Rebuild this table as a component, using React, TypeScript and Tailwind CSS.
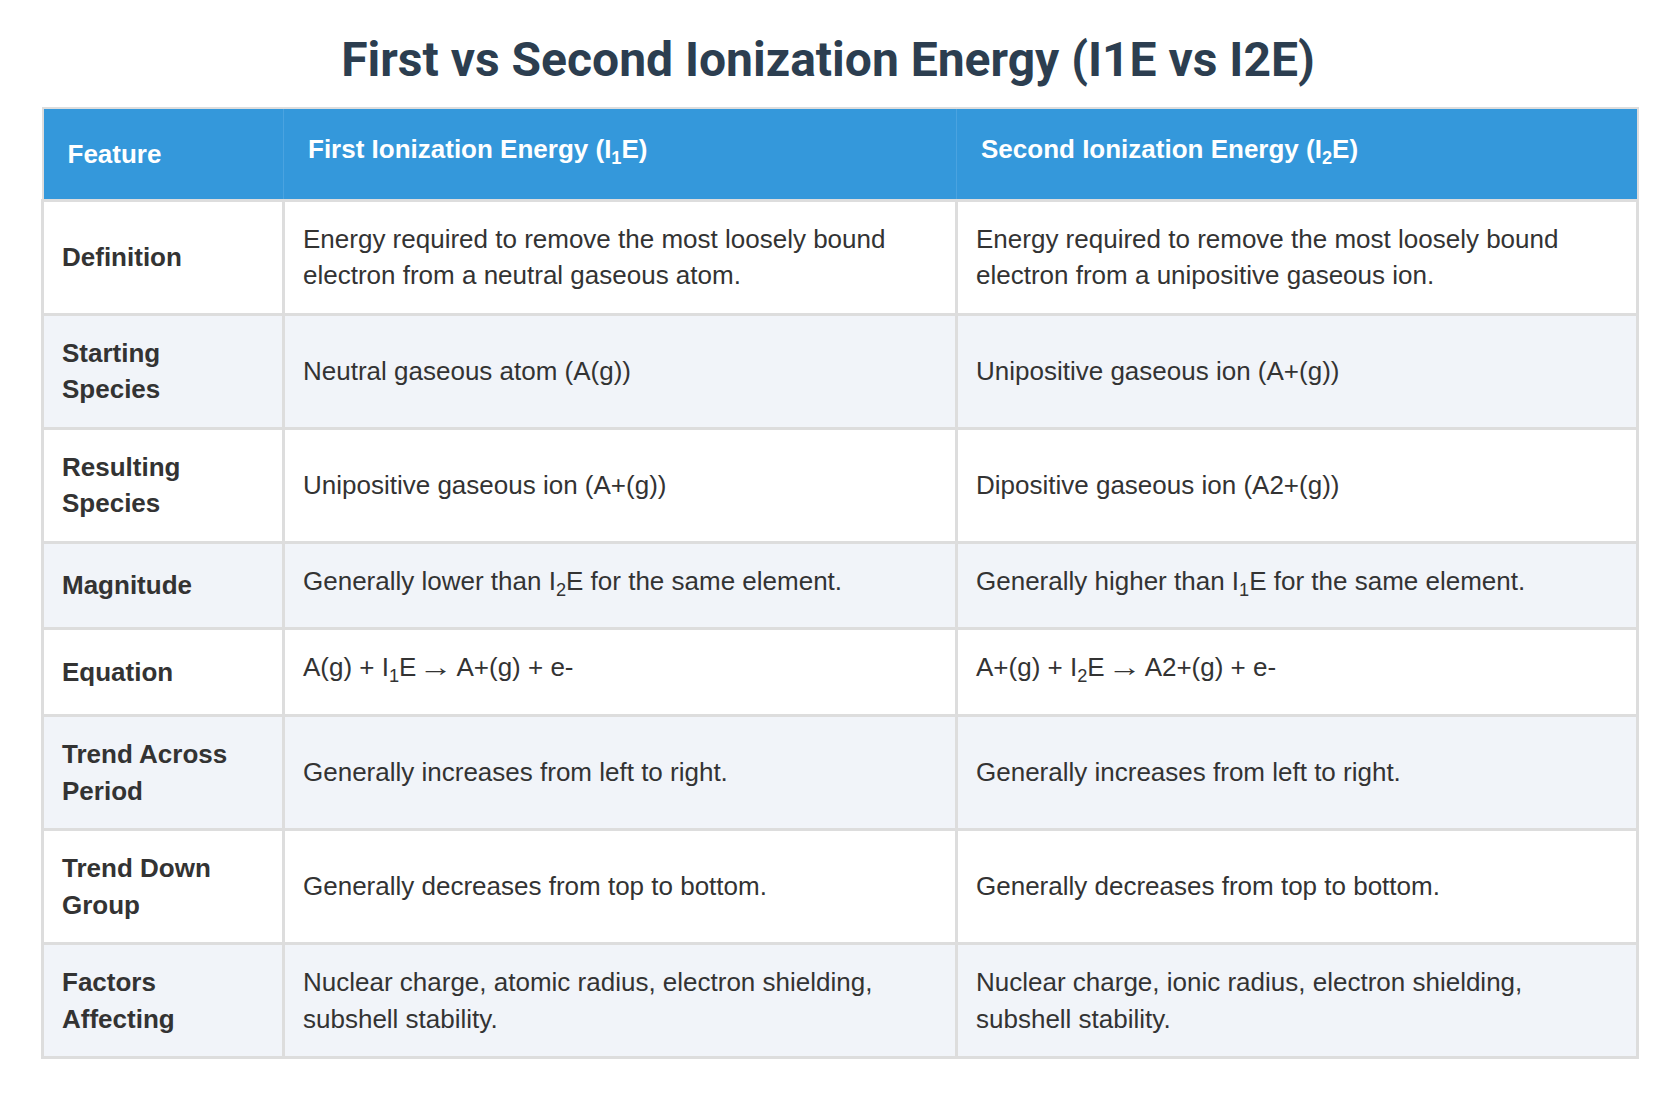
import React from "react";

type Row = {
  feature: string[];
  first: React.ReactNode;
  second: React.ReactNode;
};

function Sub({ children }: { children: React.ReactNode }) {
  return (
    <sub className="static align-sub text-[0.7em] leading-[36.5px]">{children}</sub>
  );
}

function Arrow() {
  return <span className="mx-[7px] inline-block scale-x-[1.3]">→</span>;
}

const rows: Row[] = [
  {
    feature: ["Definition"],
    first: "Energy required to remove the most loosely bound electron from a neutral gaseous atom.",
    second: "Energy required to remove the most loosely bound electron from a unipositive gaseous ion.",
  },
  {
    feature: ["Starting", "Species"],
    first: "Neutral gaseous atom (A(g))",
    second: "Unipositive gaseous ion (A+(g))",
  },
  {
    feature: ["Resulting", "Species"],
    first: "Unipositive gaseous ion (A+(g))",
    second: "Dipositive gaseous ion (A2+(g))",
  },
  {
    feature: ["Magnitude"],
    first: (
      <>
        Generally lower than I<Sub>2</Sub>E for the same element.
      </>
    ),
    second: (
      <>
        Generally higher than I<Sub>1</Sub>E for the same element.
      </>
    ),
  },
  {
    feature: ["Equation"],
    first: (
      <>
        A(g) + I<Sub>1</Sub>E<Arrow />A+(g) + e-
      </>
    ),
    second: (
      <>
        A+(g) + I<Sub>2</Sub>E<Arrow />A2+(g) + e-
      </>
    ),
  },
  {
    feature: ["Trend Across", "Period"],
    first: "Generally increases from left to right.",
    second: "Generally increases from left to right.",
  },
  {
    feature: ["Trend Down", "Group"],
    first: "Generally decreases from top to bottom.",
    second: "Generally decreases from top to bottom.",
  },
  {
    feature: ["Factors", "Affecting"],
    first: "Nuclear charge, atomic radius, electron shielding, subshell stability.",
    second: "Nuclear charge, ionic radius, electron shielding, subshell stability.",
  },
];

export default function App() {
  return (
    <div className="min-h-[1102px] bg-white font-['Liberation_Sans',Arial,sans-serif] text-[#333]">
      <h1 className="pt-[32px] pr-[24px] text-center font-['Roboto',sans-serif] text-[48px] font-bold leading-[55px] text-[#2c3e50]">
        First vs Second Ionization Energy (I1E vs I2E)
      </h1>

      <table className="mx-auto mt-[20px] w-[1598px] table-fixed border-collapse border-2 border-[#ddd] text-[26px] leading-[36.5px]">
        <colgroup>
          <col className="w-[241px]" />
          <col className="w-[673px]" />
          <col />
        </colgroup>
        <thead>
          <tr className="bg-[#3498db] text-left text-white">
            <th className="px-6 py-[22px] align-middle font-bold">Feature</th>
            <th className="border-l border-[#4aa3e0] px-6 py-[22px] align-middle font-bold">
              First Ionization Energy (I<Sub>1</Sub>E)
            </th>
            <th className="border-l border-[#4aa3e0] px-6 py-[22px] align-middle font-bold">
              Second Ionization Energy (I<Sub>2</Sub>E)
            </th>
          </tr>
        </thead>
        <tbody>
          {rows.map((row, i) => (
            <tr key={i} className={i % 2 === 1 ? "bg-[#f1f4f9]" : "bg-white"}>
              <td className="border-[3px] border-[#ddd] px-[18px] py-[19px] align-middle font-bold">
                {row.feature.map((line, j) => (
                  <div key={j}>{line}</div>
                ))}
              </td>
              <td className="border-[3px] border-[#ddd] px-[18px] py-[19px] align-middle">{row.first}</td>
              <td className="border-[3px] border-[#ddd] pl-[18px] pr-[19px] py-[19px] align-middle">{row.second}</td>
            </tr>
          ))}
        </tbody>
      </table>
    </div>
  );
}
